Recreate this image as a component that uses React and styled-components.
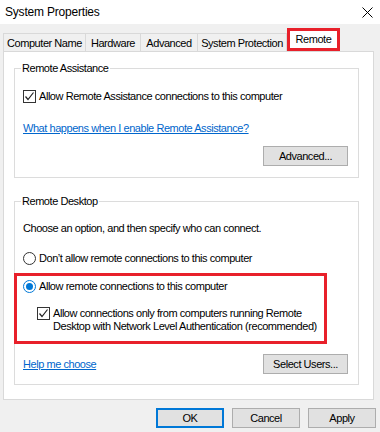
import React from 'react'
import styled, { createGlobalStyle } from 'styled-components'

const GlobalStyle = createGlobalStyle`
  html, body { margin: 0; padding: 0; background: #f0f0f0; }
  body {
    font-family: "Liberation Sans", Arial, sans-serif;
    font-size: 11px;
    letter-spacing: -0.45px;
    color: #000;
  }
`

const Window = styled.div`
  width: 380px;
  height: 432px;
  display: flex;
  flex-direction: column;
  background: #f0f0f0;
  overflow: hidden;
  & > * { flex-shrink: 0; }
`

const TitleBar = styled.div`
  height: 24px;
  box-sizing: border-box;
  background: #fff;
  display: flex;
  align-items: center;
  justify-content: space-between;
  padding: 0 7px 0 5px;
  font-size: 12px;
  letter-spacing: -0.2px;
`

const Body = styled.div`
  padding: 4px 6px 0 3px;
  display: flex;
  flex-direction: column;
  & > * { flex-shrink: 0; }
`

const TabStrip = styled.div`
  display: flex;
  align-items: flex-end;
  height: 23px;
`

const Tab = styled.div`
  width: ${p => p.w}px;
  height: 18px;
  display: flex;
  align-items: center;
  justify-content: center;
  border: 1px solid #d9d9d9;
  border-bottom: none;
  border-left-width: ${p => (p.first ? '1px' : '0')};
  box-sizing: border-box;
  white-space: nowrap;
`

const ActiveTab = styled.div`
  width: ${p => p.w}px;
  height: 23px;
  padding-bottom: 2px;
  display: flex;
  align-items: center;
  justify-content: center;
  background: #fff;
  border: 3px solid #e8202a;
  box-sizing: border-box;
  white-space: nowrap;
`

const Panel = styled.div`
  background: #fff;
  border: 1px solid #d9d9d9;
  padding: 9px 14px 14px 10px;
  display: flex;
  flex-direction: column;
  gap: 16px;
`

const Group = styled.fieldset`
  margin: 0;
  padding: 0 9px ${p => p.pb || 11}px 8px;
  border: 1px solid #dcdcdc;
  min-inline-size: 0;
  display: flex;
  flex-direction: column;
`

const Legend = styled.legend`
  padding: 0 1px;
  margin-left: -2px;
  line-height: 14px;
`

const Row = styled.label`
  display: flex;
  align-items: ${p => (p.top ? 'flex-start' : 'center')};
  gap: 3px;
  line-height: 14px;
  white-space: nowrap;
  margin-top: ${p => p.mt || 0}px;
  margin-left: ${p => p.indent || 0}px;
`

const Text = styled.div`
  line-height: ${p => p.lh || 14}px;
  margin-top: ${p => p.mt || 0}px;
  white-space: nowrap;
`

const Link = styled.a`
  color: #0066cc;
  text-decoration: underline;
  line-height: 14px;
  cursor: pointer;
`

const Box = styled.span`
  width: 13px;
  height: 13px;
  box-sizing: border-box;
  border: 1px solid #333;
  background: #fff;
  display: inline-flex;
  align-items: center;
  justify-content: center;
  flex-shrink: 0;
`

const Radio = styled.span`
  width: 13px;
  height: 13px;
  box-sizing: border-box;
  border-radius: 50%;
  border: 1px solid ${p => (p.checked ? '#0078d7' : '#333')};
  background: #fff;
  display: inline-flex;
  align-items: center;
  justify-content: center;
  flex-shrink: 0;
  &::after {
    content: '';
    width: 7px;
    height: 7px;
    border-radius: 50%;
    background: ${p => (p.checked ? '#0078d7' : 'transparent')};
  }
`

const Highlight = styled.div`
  margin: 8px 22px 0 -9px;
  border: 3px solid #e8202a;
  padding: 3px 6px 8px 6px;
  display: flex;
  flex-direction: column;
`

const ActionRow = styled.div`
  display: flex;
  justify-content: ${p => (p.split ? 'space-between' : 'flex-end')};
  align-items: center;
  margin-top: ${p => p.mt || 0}px;
  padding-right: 1px;
`

const Button = styled.button`
  font: inherit;
  letter-spacing: inherit;
  width: ${p => p.w || 85}px;
  height: 20px;
  box-sizing: border-box;
  background: #e1e1e1;
  border: ${p => (p.primary ? '2px solid #0078d7' : '1px solid #adadad')};
  padding: 0;
  color: #000;
`

const Footer = styled.div`
  display: flex;
  justify-content: flex-end;
  gap: 8px;
  padding: 8px 0 0;
  margin-right: -2px;
`

const Check = () => (
  <svg width="11" height="11" viewBox="0 0 11 11">
    <polyline points="1.5,5.5 4,8.5 9.5,1.5" fill="none" stroke="#222" strokeWidth="1.2" />
  </svg>
)

const CloseIcon = () => (
  <svg width="11" height="11" viewBox="0 0 11 11">
    <path d="M0.5 0.5 L10.5 10.5 M10.5 0.5 L0.5 10.5" stroke="#000" strokeWidth="1" />
  </svg>
)

export default function App() {
  return (
    <>
      <GlobalStyle />
      <Window>
        <TitleBar>
          <span>System Properties</span>
          <CloseIcon />
        </TitleBar>
        <Body>
          <TabStrip>
            <Tab first w={83}>Computer Name</Tab>
            <Tab w={55}>Hardware</Tab>
            <Tab w={57}>Advanced</Tab>
            <Tab w={89}>System Protection</Tab>
            <ActiveTab w={53}>Remote</ActiveTab>
          </TabStrip>
          <Panel>
            <Group>
              <Legend>Remote Assistance</Legend>
              <Row mt={14}>
                <Box><Check /></Box>
                <span>Allow Remote Assistance connections to this computer</span>
              </Row>
              <Text mt={18}><Link>What happens when I enable Remote Assistance?</Link></Text>
              <ActionRow mt={11}>
                <Button>Advanced...</Button>
              </ActionRow>
            </Group>
            <Group pb={10}>
              <Legend>Remote Desktop</Legend>
              <Text mt={13}>Choose an option, and then specify who can connect.</Text>
              <Row mt={16}>
                <Radio />
                <span>Don’t allow remote connections to this computer</span>
              </Row>
              <Highlight>
                <Row>
                  <Radio checked />
                  <span>Allow remote connections to this computer</span>
                </Row>
                <Row top indent={14} mt={14}>
                  <Box><Check /></Box>
                  <Text lh={13}>
                    Allow connections only from computers running Remote<br />
                    Desktop with Network Level Authentication (recommended)
                  </Text>
                </Row>
              </Highlight>
              <ActionRow split mt={10}>
                <Link>Help me choose</Link>
                <Button>Select Users...</Button>
              </ActionRow>
            </Group>
          </Panel>
          <Footer>
            <Button primary w={68}>OK</Button>
            <Button w={68}>Cancel</Button>
            <Button w={68}>Apply</Button>
          </Footer>
        </Body>
      </Window>
    </>
  )
}
